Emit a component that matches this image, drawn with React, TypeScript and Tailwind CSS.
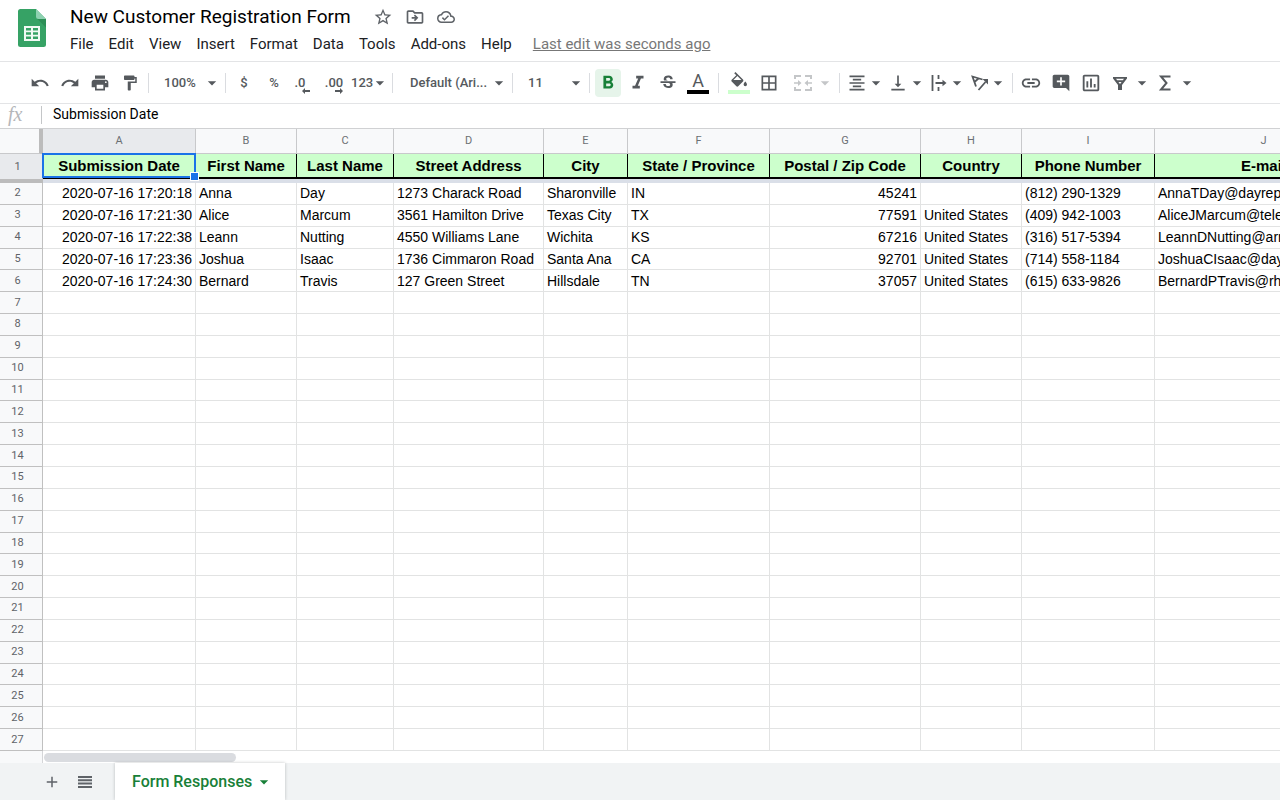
import React from "react";
import {
  MdAdd,
  MdAddComment,
  MdArrowDropDown,
  MdBorderAll,
  MdFormatAlignCenter,
  MdFormatBold,
  MdFormatItalic,
  MdFormatPaint,
  MdInsertLink,
  MdOutlineCloudDone,
  MdOutlineDriveFileMove,
  MdOutlineInsertChart,
  MdStarBorder,
  MdStrikethroughS,
  MdVerticalAlignBottom,
} from "react-icons/md";

const menus = ["File", "Edit", "View", "Insert", "Format", "Data", "Tools", "Add-ons", "Help"];

const columns = [
  { letter: "A", title: "Submission Date", width: "w-[153px]" },
  { letter: "B", title: "First Name", width: "w-[101px]" },
  { letter: "C", title: "Last Name", width: "w-[97px]" },
  { letter: "D", title: "Street Address", width: "w-[150px]" },
  { letter: "E", title: "City", width: "w-[84px]" },
  { letter: "F", title: "State / Province", width: "w-[142px]" },
  { letter: "G", title: "Postal / Zip Code", width: "w-[151px]" },
  { letter: "H", title: "Country", width: "w-[101px]" },
  { letter: "I", title: "Phone Number", width: "w-[133px]" },
  { letter: "J", title: "E-mail", width: "w-[218px]" },
];

const data = [
  ["2020-07-16 17:20:18", "Anna", "Day", "1273 Charack Road", "Sharonville", "IN", "45241", "", "(812) 290-1329", "AnnaTDay@dayrep.com"],
  ["2020-07-16 17:21:30", "Alice", "Marcum", "3561 Hamilton Drive", "Texas City", "TX", "77591", "United States", "(409) 942-1003", "AliceJMarcum@teleworm.us"],
  ["2020-07-16 17:22:38", "Leann", "Nutting", "4550 Williams Lane", "Wichita", "KS", "67216", "United States", "(316) 517-5394", "LeannDNutting@armyspy.com"],
  ["2020-07-16 17:23:36", "Joshua", "Isaac", "1736 Cimmaron Road", "Santa Ana", "CA", "92701", "United States", "(714) 558-1184", "JoshuaCIsaac@dayrep.com"],
  ["2020-07-16 17:24:30", "Bernard", "Travis", "127 Green Street", "Hillsdale", "TN", "37057", "United States", "(615) 633-9826", "BernardPTravis@rhyta.com"],
];

const rowNumbers = Array.from({ length: 26 }, (_, i) => i + 2);

const SheetsLogo = () => (
  <svg viewBox="0 0 28 38" className="w-7 h-[38px]" aria-hidden="true">
    <path d="M2.500 0H18l10 10v25.500a2.500 2.500 0 0 1-2.500 2.500h-23A2.500 2.500 0 0 1 0 35.500v-33A2.500 2.500 0 0 1 2.500 0z" fill="#36a265" />
    <path d="M19 9.500 28 18.500V10h-7z" fill="#2c8f56" />
    <path d="M18 0l10 10h-7.500A2.500 2.500 0 0 1 18 7.500z" fill="#8ed1b1" />
    <path
      d="M6 17h16v15H6zM8 19v2.500h5V19zm7 0v2.500h5V19zM8 23.300v2.500h5v-2.500zm7 0v2.500h5v-2.500zM8 27.600V30h5v-2.400zm7 0V30h5v-2.400z"
      fill="#f1f9f4"
      fillRule="evenodd"
    />
  </svg>
);

const UndoIcon = ({ className = "" }) => (
  <svg viewBox="0 0 24 24" className={`size-5 ${className}`} fill="currentColor">
    <path d="M12.500 8c-2.650 0-5.050.99-6.900 2.600L2 7v9h9l-3.620-3.620c1.390-1.160 3.160-1.880 5.120-1.880 3.540 0 6.550 2.310 7.600 5.500l2.370-.78C21.080 11.030 17.150 8 12.500 8z" />
  </svg>
);

const PrintIcon = () => (
  <svg viewBox="0 0 24 24" className="size-5" fill="currentColor">
    <path
      d="M19 8H5c-1.660 0-3 1.340-3 3v6h4v4h12v-4h4v-6c0-1.660-1.340-3-3-3zM16 19H8v-5h8zM19 12a1 1 0 1 1 0-2 1 1 0 0 1 0 2zM18 3H6v4h12z"
      fillRule="evenodd"
    />
  </svg>
);

const FillIcon = () => (
  <svg viewBox="0 0 22 18" className="w-[22px] h-[18px]" fill="currentColor">
    <path d="M15 7.500 7.500 0 6.200 1.200l2.100 2.100-4.600 4.500c-.5.500-.5 1.300 0 1.800l4.700 4.700c.5.500 1.300.5 1.800 0L15 9.400c.5-.5.500-1.400 0-1.900zM5.400 8l4-4 4 4zM17.300 9.500s-1.700 1.900-1.700 3a1.700 1.700 0 0 0 3.400 0c0-1.100-1.700-3-1.700-3z" />
  </svg>
);

const MergeIcon = () => (
  <svg viewBox="0 0 18 18" className="size-[18px]" fill="none" stroke="currentColor" strokeWidth="2">
    <path d="M1 5V2h6M11 2h6v3M1 13v3h6M11 16h6v-3" />
    <path d="M0 9h5M18 9h-5" strokeWidth="1.600" />
    <path d="M4 6l3.500 3L4 12zM14 6l-3.500 3 3.500 3z" fill="currentColor" stroke="none" />
  </svg>
);

const WrapIcon = () => (
  <svg viewBox="0 0 18 18" className="size-[18px]" fill="none" stroke="currentColor" strokeWidth="1.800">
    <path d="M2.500 1v16M8.500 1v4M8.500 13v4M5.500 9H14" />
    <path d="M12.500 5.800 16.500 9l-4 3.200z" fill="currentColor" stroke="none" />
  </svg>
);

const RotateIcon = () => (
  <svg viewBox="0 0 18 18" className="size-[18px]" fill="none" stroke="currentColor" strokeWidth="1.800">
    <path d="M5 12.500 1.500 2.500l10 3M3.500 8l4.500-4M7.500 16l7-8" />
    <path d="M11.500 5H17v5.500z" fill="currentColor" stroke="none" />
  </svg>
);

const FilterIcon = () => (
  <svg viewBox="0 0 18 18" className="size-[18px]" fill="currentColor">
    <path d="M2 3h14v1.500L11 11v5H7v-5L2 4.500zM5 4.700l1.200 1.600h5.600L13 4.700zM7.400 8 9 10l1.600-2z" fillRule="evenodd" />
  </svg>
);

const SumIcon = () => (
  <svg viewBox="0 0 18 18" className="size-[18px]" fill="none" stroke="currentColor" strokeWidth="2">
    <path d="M14.500 2.500H5L10.500 9 5 15.500h9.500" />
  </svg>
);

const SheetListIcon = () => (
  <svg viewBox="0 0 14 12" className="w-3.5 h-3" fill="currentColor">
    <path d="M0 0h14v2H0zM0 3.300h14v2H0zM0 6.600h14v2H0zM0 10h14v2H0z" />
  </svg>
);

const Arrow = ({ flip = false }) => (
  <svg viewBox="0 0 8 6" className={`absolute -bottom-0.5 w-2 h-1.5 ${flip ? "right-0 rotate-180" : "-right-1"}`} fill="currentColor">
    <path d="M3 0v2h5v2H3v2L0 3z" />
  </svg>
);

const Caret = () => <MdArrowDropDown className="size-5 -mx-px" />;

const Separator = ({ wide = false }) => (
  <div className={`w-px h-5 shrink-0 bg-[#dadce0] ${wide ? "mx-[5px]" : "mx-[3px]"}`} />
);

type ToolProps = { label: string; className?: string; children: React.ReactNode };

const Tool = ({ label, className = "", children }: ToolProps) => (
  <button aria-label={label} className={`w-[30px] h-7 shrink-0 flex items-center justify-center ${className}`}>
    {children}
  </button>
);

const DropTool = ({ label, className = "w-[41px] justify-center", children }: ToolProps) => (
  <button aria-label={label} className={`h-7 shrink-0 flex items-center ${className}`}>
    {children}
    <Caret />
  </button>
);

type SelectProps = { label: string; value: string; className: string };

const ToolSelect = ({ label, value, className }: SelectProps) => (
  <div className={`relative shrink-0 flex items-center h-7 ${className}`}>
    <select aria-label={label} className="w-full appearance-none bg-transparent outline-none">
      <option>{value}</option>
    </select>
    <span className="absolute right-px pointer-events-none">
      <Caret />
    </span>
  </div>
);

const Header = () => (
  <header className="h-[62px] shrink-0 flex items-start border-b border-[#e3e4e6]">
    <a href="#" aria-label="Sheets home" className="ml-[18px] mt-[9px]">
      <SheetsLogo />
    </a>
    <div className="ml-6 mt-1">
      <div className="flex items-center h-[26px]">
        <h1 className="text-[19px] leading-[26px] text-black">New Customer Registration Form</h1>
        <div className="ml-[22px] flex gap-3 text-[#5f6368]">
          <button aria-label="Star">
            <MdStarBorder className="size-5" />
          </button>
          <button aria-label="Move">
            <MdOutlineDriveFileMove className="size-5" />
          </button>
          <button aria-label="See document status">
            <MdOutlineCloudDone className="size-[18px]" />
          </button>
        </div>
      </div>
      <nav className="flex gap-[15px] items-center h-7 text-[15px] text-[#202124]">
        {menus.map((item) => (
          <button key={item}>{item}</button>
        ))}
        <a href="#" className="ml-1.5 underline text-[#777]">
          Last edit was seconds ago
        </a>
      </nav>
    </div>
  </header>
);

const Toolbar = () => (
  <div className="h-[42px] shrink-0 flex items-center pl-[25px] border-b border-[#e3e4e6] text-[13px] font-medium text-[#55595d] overflow-hidden">
    <Tool label="Undo">
      <UndoIcon />
    </Tool>
    <Tool label="Redo">
      <UndoIcon className="-scale-x-100" />
    </Tool>
    <Tool label="Print">
      <PrintIcon />
    </Tool>
    <Tool label="Paint format">
      <MdFormatPaint className="size-[18px]" />
    </Tool>
    <Separator />
    <ToolSelect label="Zoom" value="100%" className="w-[70px] pl-3" />
    <Separator />
    <Tool label="Format as currency">$</Tool>
    <Tool label="Format as percent">%</Tool>
    <Tool label="Decrease decimal places" className="pr-2">
      <span className="relative">
        .0
        <Arrow />
      </span>
    </Tool>
    <Tool label="Increase decimal places">
      <span className="relative">
        .00
        <Arrow flip />
      </span>
    </Tool>
    <DropTool label="More formats" className="w-10 pl-0.5 -space-x-0.5">
      <span>123</span>
    </DropTool>
    <Separator />
    <ToolSelect label="Font" value="Default (Ari..." className="w-[113px] pl-3.5" />
    <Separator />
    <ToolSelect label="Font size" value="11" className="w-[70px] pl-3" />
    <Separator />
    <Tool label="Bold">
      <span className="w-[26px] h-7 rounded-sm flex items-center justify-center bg-[#e6f4ea] text-[#188038]">
        <MdFormatBold className="size-[22px]" />
      </span>
    </Tool>
    <Tool label="Italic">
      <MdFormatItalic className="size-[22px]" />
    </Tool>
    <Tool label="Strikethrough">
      <MdStrikethroughS className="size-5" />
    </Tool>
    <Tool label="Text color" className="flex-col">
      <span className="text-[18px] leading-[18px] font-normal">A</span>
      <span className="w-[22px] h-1 bg-black" />
    </Tool>
    <Separator wide />
    <Tool label="Fill color" className="flex-col">
      <FillIcon />
      <span className="w-[22px] h-1 bg-[#ccffcc]" />
    </Tool>
    <Tool label="Borders">
      <MdBorderAll className="size-5" />
    </Tool>
    <DropTool label="Merge cells" className="w-[50px] gap-1 justify-end text-[#c4c6c8]">
      <MergeIcon />
    </DropTool>
    <Separator wide />
    <DropTool label="Horizontal align">
      <MdFormatAlignCenter className="size-5" />
    </DropTool>
    <DropTool label="Vertical align">
      <MdVerticalAlignBottom className="size-5" />
    </DropTool>
    <DropTool label="Text wrapping">
      <WrapIcon />
    </DropTool>
    <DropTool label="Text rotation">
      <RotateIcon />
    </DropTool>
    <Separator />
    <Tool label="Insert link">
      <MdInsertLink className="size-[22px]" />
    </Tool>
    <Tool label="Insert comment">
      <MdAddComment className="size-5" />
    </Tool>
    <Tool label="Insert chart">
      <MdOutlineInsertChart className="size-[22px]" />
    </Tool>
    <DropTool label="Create a filter" className="w-[45px] gap-1 justify-end">
      <FilterIcon />
    </DropTool>
    <DropTool label="Functions" className="w-[45px] gap-1 justify-end">
      <SumIcon />
    </DropTool>
  </div>
);

const FormulaBar = () => (
  <div className="h-[25px] shrink-0 flex items-start border-b border-[#d0d1d3]">
    <label htmlFor="formula" className="w-[41px] pl-2 font-['Liberation_Serif',serif] italic text-[20px] leading-5 text-[#b5b7ba]">
      fx
    </label>
    <div className="w-px h-[18px] mt-0.5 bg-[#c4c6c8]" />
    <input id="formula" defaultValue="Submission Date" className="flex-1 pl-[11px] text-[14px] leading-5 text-black outline-none" />
  </div>
);

const Sheet = () => (
  <div className="flex-1 min-h-0 overflow-hidden">
    <table className="h-full table-fixed w-[1373px] border-separate border-spacing-0 font-['Liberation_Sans',Arial,sans-serif] text-[14px] leading-5 text-black">
      <colgroup>
        <col className="w-[43px]" />
        {columns.map((c) => (
          <col key={c.letter} className={c.width} />
        ))}
      </colgroup>
      <thead className="font-[Roboto,sans-serif] text-[11px] leading-4 text-[#6b6f73]">
        <tr className="h-[25px]">
          <td className="bg-[#f8f9fa] border-r-4 border-b border-r-[#bcbcbc] border-b-[#c8c9cb]" />
          {columns.map((c) => (
            <th
              key={c.letter}
              scope="col"
              className={`p-0 font-normal border-r border-b border-[#c8c9cb] ${c.letter === "A" ? "bg-[#e8eaed]" : "bg-[#f8f9fa]"}`}
            >
              {c.letter}
            </th>
          ))}
        </tr>
      </thead>
      <tbody>
        <tr className="h-[25px]">
          <th scope="row" className="p-0 pr-[7px] bg-[#e8eaed] border-r border-[#c0c0c0] font-[Roboto,sans-serif] text-[11px] font-normal text-[#5f6368]">
            1
          </th>
          {columns.map((c) => (
            <th key={c.letter} className="relative p-0 bg-[#ccffcc] border-r border-b-2 border-black text-[15px] font-bold">
              {c.title}
              {c.letter === "A" && (
                <div className="absolute z-10 -left-px -top-px -right-px -bottom-px border-2 border-[#1a73e8]">
                  <span className="absolute -right-1 -bottom-1 size-[7px] bg-[#1a73e8] outline outline-white" />
                </div>
              )}
            </th>
          ))}
        </tr>
        <tr className="h-1">
          <td className="p-0 bg-[#bcbcbc]" />
          <td colSpan={10} className="p-0 bg-[#dadfe8]" />
        </tr>
        {rowNumbers.map((n) => (
          <tr key={n}>
            <th scope="row" className="p-0 pr-[7px] bg-[#f8f9fa] border-r border-b border-[#c0c0c0] font-[Roboto,sans-serif] text-[11px] font-normal text-[#5f6368]">
              {n}
            </th>
            {columns.map((c, i) => (
              <td
                key={c.letter}
                className={`py-0 px-[3px] border-r border-b border-[#e2e3e3] whitespace-nowrap ${i === 0 || i === 6 ? "text-right" : "text-left"}`}
              >
                {data[n - 2]?.[i]}
              </td>
            ))}
          </tr>
        ))}
      </tbody>
    </table>
  </div>
);

const Footer = () => (
  <footer className="shrink-0">
    <div className="h-3 flex">
      <div className="w-[43px] bg-[#f8f9fa] border-r border-[#d5d6d8]" />
      <div className="flex-1 flex items-center pl-px">
        <div className="w-48 h-[9px] rounded-full bg-[#dadce0]" />
      </div>
    </div>
    <div className="h-[37px] flex items-center bg-[#f1f3f4] text-[#5f6368]">
      <button aria-label="Add sheet" className="ml-[43px]">
        <MdAdd className="size-[18px]" />
      </button>
      <button aria-label="All sheets" className="ml-[17px]">
        <SheetListIcon />
      </button>
      <button className="ml-[23px] h-full pl-[17px] pr-3 flex items-center gap-[3px] bg-white shadow-[0_0_3px_rgba(60,64,67,0.3)] text-[16px] font-medium text-[#188038]">
        Form Responses
        <Caret />
      </button>
    </div>
  </footer>
);

const App = () => {
  return (
    <div className="h-screen flex flex-col overflow-hidden bg-white font-[Roboto,sans-serif]">
      <Header />
      <Toolbar />
      <FormulaBar />
      <Sheet />
      <Footer />
    </div>
  );
};

export default App;
